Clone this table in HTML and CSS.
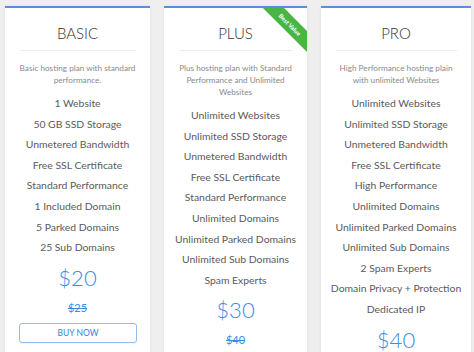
FILE: index.html
```html
<!DOCTYPE html>
<html>
<head>
<meta charset="utf-8">
<link rel="stylesheet" href="styles.css">
</head>
<body>
<div class="plans">
  <div class="card card-basic">
    <h2 class="title">BASIC</h2>
    <div class="divider"></div>
    <p class="desc">Basic hosting plan with standard<br>performance.</p>
    <ul class="features">
      <li>1 Website</li>
      <li>50 GB SSD Storage</li>
      <li>Unmetered Bandwidth</li>
      <li>Free SSL Certificate</li>
      <li>Standard Performance</li>
      <li>1 Included Domain</li>
      <li>5 Parked Domains</li>
      <li>25 Sub Domains</li>
    </ul>
    <div class="price">$20</div>
    <div class="old-price">$25</div>
    <a class="buy">BUY NOW</a>
  </div>
  <div class="card card-plus">
    <div class="ribbon">Best Value</div>
    <h2 class="title">PLUS</h2>
    <div class="divider"></div>
    <p class="desc">Plus hosting plan with Standard<br>Performance and Unlimited<br>Websites</p>
    <ul class="features">
      <li>Unlimited Websites</li>
      <li>Unlimited SSD Storage</li>
      <li>Unmetered Bandwidth</li>
      <li>Free SSL Certificate</li>
      <li>Standard Performance</li>
      <li>Unlimited Domains</li>
      <li>Unlimited Parked Domains</li>
      <li>Unlimited Sub Domains</li>
      <li>Spam Experts</li>
    </ul>
    <div class="price">$30</div>
    <div class="old-price">$40</div>
  </div>
  <div class="card card-pro">
    <h2 class="title">PRO</h2>
    <div class="divider"></div>
    <p class="desc">High Performance hosting plain<br>with unlimited Websites</p>
    <ul class="features">
      <li>Unlimited Websites</li>
      <li>Unlimited SSD Storage</li>
      <li>Unmetered Bandwidth</li>
      <li>Free SSL Certificate</li>
      <li>High Performance</li>
      <li>Unlimited Domains</li>
      <li>Unlimited Parked Domains</li>
      <li>Unlimited Sub Domains</li>
      <li>2 Spam Experts</li>
      <li>Domain Privacy + Protection</li>
      <li>Dedicated IP</li>
    </ul>
    <div class="price">$40</div>
  </div>
</div>
</body>
</html>
```
FILE: styles.css
```css
html, body {
  margin: 0;
  padding: 0;
  background: #efefef;
  overflow: hidden;
  height: 352px;
}
body {
  font-family: Lato, "Open Sans", Arial, sans-serif;
}
.plans {
  display: flex;
  gap: 14px;
  padding: 6px 0 0 5px;
}
.card {
  position: relative;
  overflow: hidden;
  background: #fff;
  border-top: 2px solid #5d8fd8;
  box-shadow: 0 0 3px rgba(0, 0, 0, 0.07);
  height: 400px;
  padding-top: 14.5px;
  box-sizing: border-box;
  text-align: center;
}
.card-basic { width: 145px; }
.card-plus { width: 143px; }
.card-pro { width: 150px; }
.title {
  margin: 0;
  font-size: 15px;
  line-height: 20px;
  font-weight: 300;
  color: #333;
}
.divider {
  height: 1px;
  background: #ececec;
  margin: 7.5px 14px 0 15px;
}
.desc {
  margin: 11px 0 0;
  font-size: 8.2px;
  line-height: 12px;
  color: #8a8a8a;
}
.features {
  list-style: none;
  margin: 7px 0 0;
  padding: 0;
  font-size: 10.4px;
  line-height: 20.6px;
  color: #5a5a5a;
}
.price {
  margin-top: 5px;
  font-size: 22px;
  line-height: 30px;
  font-weight: 300;
  color: #3a8ce4;
}
.old-price {
  margin-top: 7px;
  font-size: 11px;
  line-height: 16px;
  color: #3a8ce4;
  text-decoration: line-through;
}
.buy {
  display: block;
  margin: 7px 13px 0 14px;
  height: 20px;
  box-sizing: border-box;
  border: 1px solid #95bbec;
  border-radius: 3px;
  font-size: 8.5px;
  line-height: 18px;
  color: #3a7fd8;
  box-shadow: 0 1px 1px rgba(0, 0, 0, 0.05);
}
.ribbon {
  position: absolute;
  left: 89px;
  top: 9px;
  width: 74px;
  height: 15px;
  background: #4bb543;
  color: #fff;
  font-size: 6px;
  font-weight: 700;
  line-height: 15px;
  text-align: center;
  transform: rotate(45deg);
}
```
